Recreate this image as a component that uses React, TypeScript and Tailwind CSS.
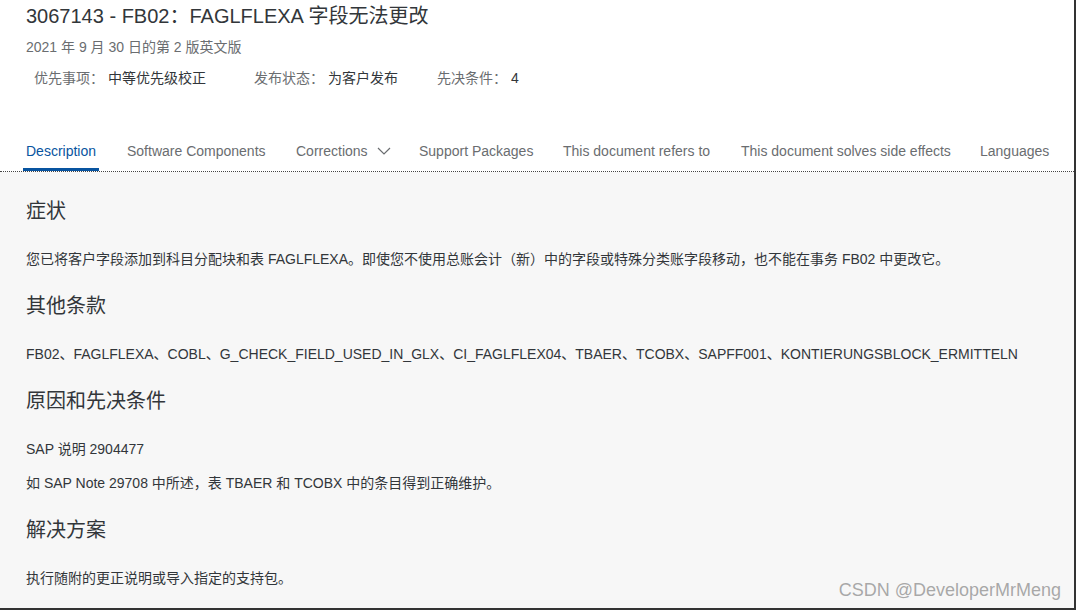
import React from 'react';

const font = { fontFamily: '"Liberation Sans", "Noto Sans CJK SC", Arial, sans-serif' };

const tabs = [
  { label: 'Description', w: 'w-[101px]', active: true },
  { label: 'Software Components', w: 'w-[169px]' },
  { label: 'Corrections', w: 'w-[123px]', menu: true },
  { label: 'Support Packages', w: 'w-[144px]' },
  { label: 'This document refers to', w: 'w-[178px]' },
  { label: 'This document solves side effects', w: 'w-[239px]' },
  { label: 'Languages', w: 'w-[90px]' },
];

function Meta({ label, value, className }: { label: string; value: string; className: string }) {
  return (
    <div className={`flex ${className}`}>
      <span className="w-[74px] text-[#6a6d70]">{label}</span>
      <span className="text-[#32363a]">{value}</span>
    </div>
  );
}

function Section({ title, children, first }: { title: string; children: React.ReactNode; first?: boolean }) {
  return (
    <section className={first ? 'mt-[25px]' : 'mt-[23px]'}>
      <h2 className="text-[20px] leading-[28px] text-[#32363a]">{title}</h2>
      <div className="mt-[24px] flex flex-col gap-[14px] text-[14px] leading-[20px] text-[#32363a]">{children}</div>
    </section>
  );
}

export default function App() {
  return (
    <div
      className="relative w-[1076px] h-[610px] overflow-hidden flex flex-col bg-white border-r-2 border-b-2 border-[#333]"
      style={font}
    >
      {/* Header */}
      <header className="bg-white">
        <h1 className="pl-[26px] text-[20px] leading-[32px] text-[#32363a]">
          3067143 - FB02：FAGLFLEXA 字段无法更改
        </h1>
        <div className="mt-[5px] pl-[26px] text-[14px] leading-[20px] text-[#6a6d70]">
          2021 年 9 月 30 日的第 2 版英文版
        </div>
        <div className="mt-[11px] pl-[34px] flex text-[14px] leading-[20px]">
          <Meta label="优先事项：" value="中等优先级校正" className="w-[220px]" />
          <Meta label="发布状态：" value="为客户发布" className="w-[183px]" />
          <Meta label="先决条件：" value="4" className="" />
        </div>

        {/* Tabs */}
        <nav className="mt-[43px] flex pl-[23px] border-b border-dotted border-[#444]">
          {tabs.map(t => (
            <div key={t.label} className={`${t.w} shrink-0 flex`}>
              <div
                className={`flex items-center gap-[9px] px-[3px] pt-[10px] pb-[7px] border-b-[3px] text-[14px] leading-[20px] whitespace-nowrap ${
                  t.active ? 'border-[#0854a0] text-[#0854a0]' : 'border-transparent text-[#6a6d70]'
                }`}
              >
                <span>{t.label}</span>
                {t.menu && (
                  <svg width="14" height="8" viewBox="0 0 14 8" fill="none">
                    <path d="M1 1L7 7L13 1" stroke="#6a6d70" strokeWidth="1.2" />
                  </svg>
                )}
              </div>
            </div>
          ))}
        </nav>
      </header>

      {/* Content */}
      <main className="flex-1 bg-[#f7f7f7] pl-[26px]">
        <Section title="症状" first>
          <p>
            您已将客户字段添加到科目分配块和表 FAGLFLEXA。即使您不使用总账会计（新）中的字段或特殊分类账字段移动，也不能在事务 FB02 中更改它。
          </p>
        </Section>
        <Section title="其他条款">
          <p>
            FB02、FAGLFLEXA、COBL、G_CHECK_FIELD_USED_IN_GLX、CI_FAGLFLEX04、TBAER、TCOBX、SAPFF001、KONTIERUNGSBLOCK_ERMITTELN
          </p>
        </Section>
        <Section title="原因和先决条件">
          <p>SAP 说明 2904477</p>
          <p>如 SAP Note 29708 中所述，表 TBAER 和 TCOBX 中的条目得到正确维护。</p>
        </Section>
        <Section title="解决方案">
          <p>执行随附的更正说明或导入指定的支持包。</p>
        </Section>
      </main>

      {/* Watermark */}
      <div className="absolute right-[13px] bottom-[6px] text-[18px] leading-[24px] text-[#a8a8a8] [text-shadow:0_0_1px_#fff]">
        CSDN @DeveloperMrMeng
      </div>
    </div>
  );
}
